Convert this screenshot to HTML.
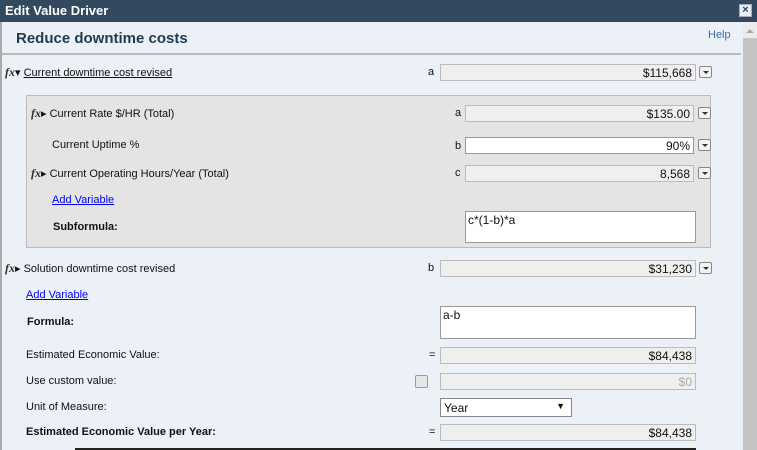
<!DOCTYPE html>
<html><head><style>
*{box-sizing:border-box;margin:0;padding:0}
body{width:757px;height:450px;overflow:hidden;background:#ecf1f8;font-family:"Liberation Sans",sans-serif;font-size:11px;color:#111;position:relative}
.a{position:absolute;white-space:nowrap}
.tb{left:0;top:0;width:757px;height:22px;background:#324960;color:#fff;font-weight:bold;font-size:13px;padding:3px 0 0 5px}
.inp{position:absolute;height:17px;background:#efefef;border:1px solid #bbb;text-align:right;padding:1px 3px 0 0;font-size:12px}
.w{background:#fff;border-color:#999}
.dd{position:absolute;width:13px;height:12px;border:1px solid #888;background:#f2f2f2;border-radius:2px}
.dd:after{content:"";position:absolute;left:3px;top:4px;border-left:3px solid transparent;border-right:3px solid transparent;border-top:3px solid #333}
.fx{font-family:"Liberation Serif",serif;font-style:italic;font-weight:bold;font-size:12px;color:#333}
.lk{color:#00e;text-decoration:underline}
.ta{position:absolute;background:#fff;border:1px solid #999;font-size:12px;padding:1px 2px}
.b{font-weight:bold}
</style></head><body>
<div class="a tb">Edit Value Driver</div>
<div class="a" style="left:739px;top:4px;width:13px;height:13px;background:#e8eef8;border:1px solid #aab;color:#246;font-size:11px;line-height:11px;text-align:center;font-weight:bold">×</div>
<div class="a" style="left:0;top:22px;width:2px;height:428px;background:#aaa"></div>
<div class="a" style="left:16px;top:30px;font-size:15px;font-weight:bold;color:#1e3c4e">Reduce downtime costs</div>
<div class="a" style="left:708px;top:29px;color:#3a6ea5;font-size:11px">Help</div>
<div class="a" style="left:2px;top:53px;width:739px;height:2px;background:#bbb"></div>
<div class="a" style="left:743px;top:22px;width:14px;height:428px;background:#ececec"></div>
<div class="a" style="left:743px;top:38px;width:14px;height:412px;background:#c4c4c4"></div>
<div class="a" style="left:746px;top:29px;border-left:4px solid transparent;border-right:4px solid transparent;border-bottom:4px solid #aaa"></div>

<div class="a" style="left:5px;top:65px"><span class="fx">fx</span>▾ <span style="text-decoration:underline">Current downtime cost revised</span></div>
<div class="a" style="left:428px;top:66px">a</div>
<div class="inp" style="left:440px;top:64px;width:256px">$115,668</div>
<div class="dd" style="left:699px;top:66px"></div>

<div class="a" style="left:26px;top:95px;width:685px;height:153px;background:#e4e4e4;border:1px solid #bbb"></div>
<div class="a" style="left:31px;top:106px"><span class="fx">fx</span>▸ Current Rate $/HR (Total)</div>
<div class="a" style="left:455px;top:107px">a</div>
<div class="inp" style="left:465px;top:105px;width:229px">$135.00</div>
<div class="dd" style="left:698px;top:107px"></div>
<div class="a" style="left:52px;top:139px">Current Uptime %</div>
<div class="a" style="left:455px;top:140px">b</div>
<div class="inp w" style="left:465px;top:137px;width:229px">90%</div>
<div class="dd" style="left:698px;top:139px"></div>
<div class="a" style="left:31px;top:166px"><span class="fx">fx</span>▸ Current Operating Hours/Year (Total)</div>
<div class="a" style="left:455px;top:167px">c</div>
<div class="inp" style="left:465px;top:165px;width:229px">8,568</div>
<div class="dd" style="left:698px;top:167px"></div>
<div class="a lk" style="left:52px;top:194px">Add Variable</div>
<div class="a b" style="left:53px;top:221px">Subformula:</div>
<div class="ta" style="left:465px;top:211px;width:231px;height:32px">c*(1-b)*a</div>

<div class="a" style="left:5px;top:261px"><span class="fx">fx</span>▸ Solution downtime cost revised</div>
<div class="a" style="left:428px;top:262px">b</div>
<div class="inp" style="left:440px;top:260px;width:256px">$31,230</div>
<div class="dd" style="left:699px;top:262px"></div>
<div class="a lk" style="left:26px;top:289px">Add Variable</div>
<div class="a b" style="left:27px;top:316px">Formula:</div>
<div class="ta" style="left:440px;top:306px;width:256px;height:33px">a-b</div>

<div class="a" style="left:26px;top:349px">Estimated Economic Value:</div>
<div class="a" style="left:429px;top:349px">=</div>
<div class="inp" style="left:440px;top:347px;width:256px">$84,438</div>
<div class="a" style="left:26px;top:375px">Use custom value:</div>
<div class="a" style="left:415px;top:375px;width:13px;height:13px;border:1px solid #999;border-radius:2px;background:#e6e6e6"></div>
<div class="inp" style="left:440px;top:373px;width:256px;color:#aaa">$0</div>
<div class="a" style="left:26px;top:401px">Unit of Measure:</div>
<div class="a" style="left:440px;top:398px;width:132px;height:19px;background:#fff;border:1px solid #888;font-size:12px;padding:2px 3px">Year<span style="position:absolute;right:6px;top:2px;font-size:9px">▼</span></div>
<div class="a b" style="left:26px;top:426px">Estimated Economic Value per Year:</div>
<div class="a" style="left:429px;top:426px">=</div>
<div class="inp" style="left:440px;top:424px;width:256px">$84,438</div>
<div class="a" style="left:75px;top:448px;width:621px;height:2px;background:#222"></div>
</body></html>
